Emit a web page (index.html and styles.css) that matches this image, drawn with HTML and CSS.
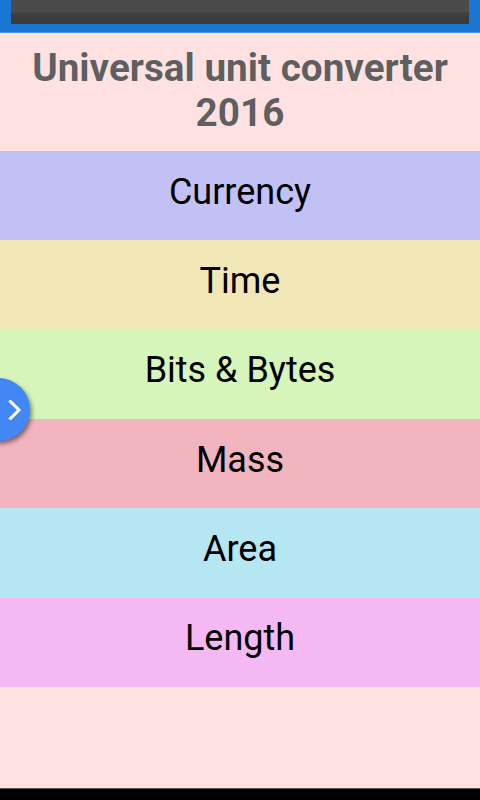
FILE: index.html
```html
<!DOCTYPE html>
<html>
<head>
<meta charset="utf-8">
<link rel="stylesheet" href="styles.css">
</head>
<body>
<div class="screen">
  <div class="topbar"><div class="topbar-inner"></div></div>
  <main class="content">
    <h1 class="title">Universal unit converter 2016</h1>
    <div class="row currency">Currency</div>
    <div class="row time">Time</div>
    <div class="row bits">Bits &amp; Bytes</div>
    <div class="row mass">Mass</div>
    <div class="row area">Area</div>
    <div class="row length">Length</div>
  </main>
  <div class="navbar"></div>
  <button class="fab" aria-label="open">
    <svg width="14" height="20" viewBox="0 0 14 20"><path d="M2.5 1.5 L11 10 L2.5 18.5" fill="none" stroke="#fff" stroke-width="3" stroke-linecap="square"/></svg>
  </button>
</div>
</body>
</html>
```
FILE: styles.css
```css
html, body {
  margin: 0;
  padding: 0;
}
body {
  font-family: Roboto, "Noto Sans", sans-serif;
}
.screen {
  position: relative;
  width: 480px;
  height: 800px;
  display: flex;
  flex-direction: column;
  background: #ffe1e2;
  overflow: hidden;
}
.topbar {
  height: 32px;
  background: #1976d2;
  padding: 0 11px;
  border-bottom: 1px solid #4b95e0;
  margin-bottom: 1px;
  box-sizing: content-box;
}
.topbar-inner {
  height: 24px;
  background: linear-gradient(to bottom, #4a4a4a 0, #4a4a4a 12px, #3f3f3f 13px, #3c3c3c 24px);
}
.content {
  flex: 1;
  display: flex;
  flex-direction: column;
  background: #ffe1e2;
}
.title {
  margin: 0;
  height: 117px;
  display: flex;
  align-items: center;
  justify-content: center;
  text-align: center;
  font-size: 38.7px;
  font-weight: 700;
  line-height: 45px;
  color: #5f5f5f;
  padding: 0 10px 5px;
  box-sizing: border-box;
  text-shadow: 0 0 1px #fff;
}
.row {
  height: 89.33px;
  display: flex;
  align-items: center;
  justify-content: center;
  font-size: 36px;
  color: #000;
  padding-bottom: 8px;
  box-sizing: border-box;
}
.currency { background: #c2c1f5; }
.time { background: #f1e6b5; }
.bits { background: #d5f5bb; }
.mass { background: #f2b5c0; }
.area { background: #b6e6f1; }
.length { background: #f4b8f3; }
.navbar {
  height: 11px;
  background: #000;
  border-top: 1px solid #5a5a5a;
}
.fab {
  position: absolute;
  left: -33px;
  top: 378px;
  width: 63px;
  height: 63px;
  border-radius: 50%;
  border: none;
  background: #4287f5;
  box-shadow: 2px 3px 4px rgba(0,0,0,0.45);
  display: flex;
  align-items: center;
  justify-content: flex-end;
  padding: 0 8px 0 0;
  box-sizing: border-box;
}
```
